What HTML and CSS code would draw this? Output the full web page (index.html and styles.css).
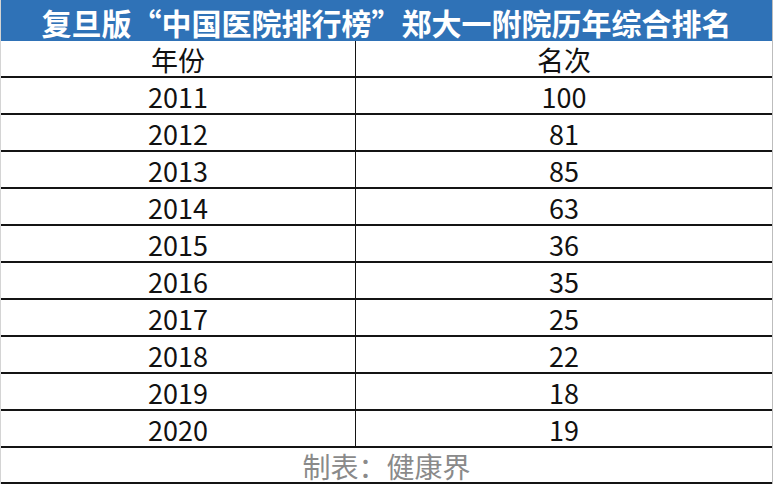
FILE: index.html
```html
<!DOCTYPE html>
<html lang="zh-CN">
<head>
<meta charset="utf-8">
<link rel="stylesheet" href="styles.css">
</head>
<body>
<div class="table">
  <div class="title">复旦版“中国医院排行榜”郑大一附院历年综合排名</div>
  <div class="row"><div class="cell left">年份</div><div class="cell right">名次</div></div>
  <div class="row"><div class="cell left">2011</div><div class="cell right">100</div></div>
  <div class="row"><div class="cell left">2012</div><div class="cell right">81</div></div>
  <div class="row"><div class="cell left">2013</div><div class="cell right">85</div></div>
  <div class="row"><div class="cell left">2014</div><div class="cell right">63</div></div>
  <div class="row"><div class="cell left">2015</div><div class="cell right">36</div></div>
  <div class="row"><div class="cell left">2016</div><div class="cell right">35</div></div>
  <div class="row"><div class="cell left">2017</div><div class="cell right">25</div></div>
  <div class="row"><div class="cell left">2018</div><div class="cell right">22</div></div>
  <div class="row"><div class="cell left">2019</div><div class="cell right">18</div></div>
  <div class="row"><div class="cell left">2020</div><div class="cell right">19</div></div>
  <div class="footer">制表：健康界</div>
</div>
</body>
</html>
```

FILE: styles.css
```css
html, body {
  margin: 0;
  padding: 0;
  background: #ffffff;
}
body {
  width: 774px;
  height: 485px;
  overflow: hidden;
  font-family: "Noto Sans CJK SC", "Noto Sans", sans-serif;
}
.table {
  width: 773px;
  border-left: 1px solid #d4d4d4;
  border-right: 1px solid #bdbdbd;
  box-sizing: border-box;
  display: flex;
  flex-direction: column;
}
.title {
  height: 41px;
  box-sizing: border-box;
  padding-top: 3px;
  background: #2f72b7;
  color: #ffffff;
  font-weight: bold;
  font-size: 30px;
  line-height: 38px;
  text-align: center;
  white-space: nowrap;
}
.row {
  height: 37px;
  box-sizing: border-box;
  border-bottom: 2px solid #141414;
  display: grid;
  grid-template-columns: 355px 1fr;
}
.cell {
  font-size: 27px;
  line-height: 37px;
  color: #111111;
  text-align: center;
}
.left {
  border-right: 1px solid #141414;
}
.footer {
  height: 36px;
  box-sizing: border-box;
  border-bottom: 2px solid #141414;
  font-size: 28px;
  line-height: 36px;
  color: #8a8a8a;
  text-align: center;
}
```
